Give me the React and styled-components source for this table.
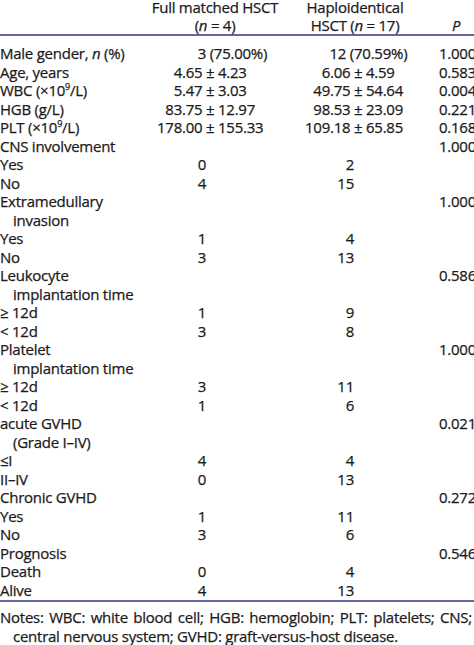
import React from "react";
import styled, { createGlobalStyle } from "styled-components";

const GlobalStyle = createGlobalStyle`
  html, body {
    margin: 0;
    padding: 0;
    background: #ffffff;
    overflow: hidden;
  }
  body {
    font-family: "Open Sans", "Noto Sans", sans-serif;
    font-size: 15px;
    letter-spacing: -0.25px;
    color: #1c1a1b;
    -webkit-text-stroke: 0.25px #1c1a1b;
  }
`;

const RULE = "#6565a2";

const Page = styled.div`
  width: 474px;
  height: 645px;
  overflow: hidden;
`;

const Table = styled.div`
  display: grid;
  grid-template-columns: 150px 130px 150px 60px;
  width: 490px;
  margin-top: -2px;
`;

const Head = styled.div`
  display: contents;
`;

const HeadCell = styled.div`
  display: flex;
  flex-direction: column;
  justify-content: flex-end;
  align-items: center;
  line-height: 18px;
  border-bottom: 2px solid ${RULE};
  margin-bottom: 8px;
  white-space: nowrap;
  text-align: center;
`;

const PHead = styled(HeadCell)`
  align-items: flex-start;
  padding-left: 22px;
  font-style: italic;
`;

const Body = styled.div`
  display: contents;
`;

const Label = styled.div`
  line-height: 18.5px;
  padding-left: ${(p) => (p.$indent ? 13 : 0)}px;
  white-space: nowrap;
`;

const Value = styled.div`
  line-height: 18.5px;
  white-space: nowrap;
`;

const Lead = styled.span`
  display: inline-block;
  width: ${(p) => p.$w}px;
  text-align: right;
`;

const PValue = styled.div`
  line-height: 18.5px;
  padding-left: 9px;
  white-space: nowrap;
`;

const Foot = styled.div`
  grid-column: 1 / -1;
  border-top: 2px solid ${RULE};
  margin-top: 1px;
  height: 0;
`;

const Notes = styled.p`
  margin: 6px 0 0;
  width: 472px;
  padding-left: 13px;
  text-indent: -13px;
  box-sizing: border-box;
  text-align: justify;
  line-height: 18.5px;
`;

const Sup = styled.sup`
  font-size: 9px;
  line-height: 0;
  vertical-align: 6px;
`;

const I = styled.i`
  font-style: italic;
`;

const x109 = (name) => (
  <>
    {name} (×10<Sup>9</Sup>/L)
  </>
);

// [label, indent, col2 [lead, tail], col3 [lead, tail], P]
const rows = [
  [<>Male gender, <I>n</I> (%)</>, 0, ["3", " (75.00%)"], ["12 (", "70.59%)"], "1.0000"],
  ["Age, years", 0, ["4.65\u00a0", "± 4.23"], ["6.06\u00a0", "± 4.59"], "0.5838"],
  [x109("WBC"), 0, ["5.47\u00a0", "± 3.03"], ["49.75\u00a0", "± 54.64"], "0.0041"],
  ["HGB (g/L)", 0, ["83.75\u00a0", "± 12.97"], ["98.53\u00a0", "± 23.09"], "0.221"],
  [x109("PLT"), 0, ["178.00\u00a0", "± 155.33"], ["109.18\u00a0", "± 65.85"], "0.1683"],
  ["CNS involvement", 0, null, null, "1.0000"],
  ["Yes", 0, ["0", ""], ["2", ""], ""],
  ["No", 0, ["4", ""], ["15", ""], ""],
  ["Extramedullary", 0, null, null, "1.0000"],
  ["invasion", 1, null, null, ""],
  ["Yes", 0, ["1", ""], ["4", ""], ""],
  ["No", 0, ["3", ""], ["13", ""], ""],
  ["Leukocyte", 0, null, null, "0.586"],
  ["implantation time", 1, null, null, ""],
  ["≥ 12d", 0, ["1", ""], ["9", ""], ""],
  ["< 12d", 0, ["3", ""], ["8", ""], ""],
  ["Platelet", 0, null, null, "1.0000"],
  ["implantation time", 1, null, null, ""],
  ["≥ 12d", 0, ["3", ""], ["11", ""], ""],
  ["< 12d", 0, ["1", ""], ["6", ""], ""],
  ["acute GVHD", 0, null, null, "0.021"],
  ["(Grade I–IV)", 1, null, null, ""],
  ["≤I", 0, ["4", ""], ["4", ""], ""],
  ["II–IV", 0, ["0", ""], ["13", ""], ""],
  ["Chronic GVHD", 0, null, null, "0.2727"],
  ["Yes", 0, ["1", ""], ["11", ""], ""],
  ["No", 0, ["3", ""], ["6", ""], ""],
  ["Prognosis", 0, null, null, "0.546"],
  ["Death", 0, ["0", ""], ["4", ""], ""],
  ["Alive", 0, ["4", ""], ["13", ""], ""],
];

const Cell = ({ v, w }) => (
  <Value>
    {v && (
      <>
        <Lead $w={w}>{v[0]}</Lead>
        {v[1]}
      </>
    )}
  </Value>
);

export default function App() {
  return (
    <Page>
      <GlobalStyle />
      <Table>
        <Head>
          <HeadCell />
          <HeadCell>
            <span>Full matched HSCT</span>
            <span>
              (<I>n</I> = 4)
            </span>
          </HeadCell>
          <HeadCell>
            <span>Haploidentical</span>
            <span>
              HSCT (<I>n</I> = 17)
            </span>
          </HeadCell>
          <PHead>P</PHead>
        </Head>
        <Body>
          {rows.map((r, i) => (
            <React.Fragment key={i}>
              <Label $indent={r[1]}>{r[0]}</Label>
              <Cell v={r[2]} w={56} />
              <Cell v={r[3]} w={74} />
              <PValue>{r[4]}</PValue>
            </React.Fragment>
          ))}
        </Body>
        <Foot />
      </Table>
      <Notes>
        Notes: WBC: white blood cell; HGB: hemoglobin; PLT: platelets; CNS;
        central nervous system; GVHD: graft-versus-host disease.
      </Notes>
    </Page>
  );
}
